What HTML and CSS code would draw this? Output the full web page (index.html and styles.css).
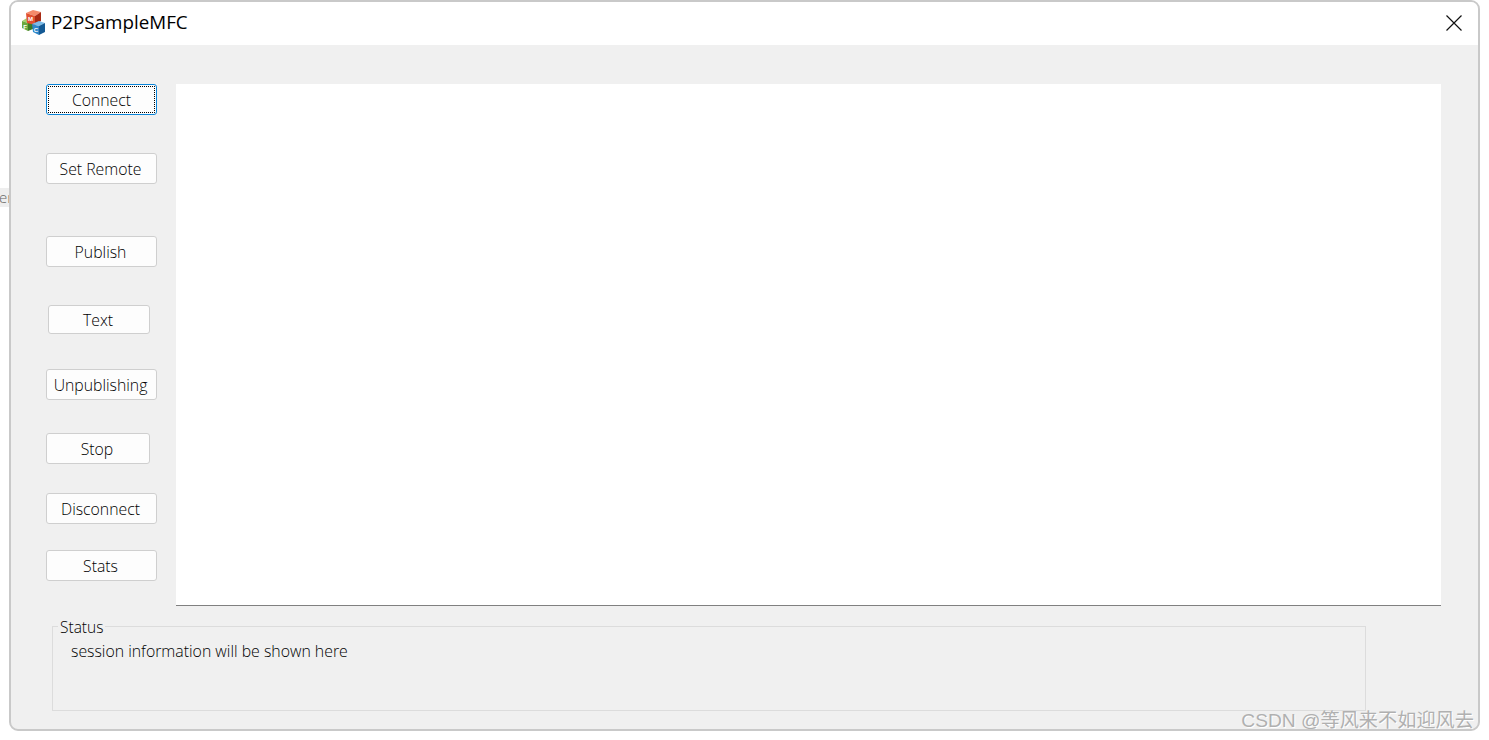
FILE: index.html
```html
<!DOCTYPE html>
<html lang="en">
<head>
<meta charset="utf-8">
<title>P2PSampleMFC</title>
<link rel="stylesheet" href="styles.css">
</head>
<body>
<div class="behind-tab"><span>en</span></div>
<div class="window">
  <header class="titlebar">
    <svg class="app-icon" width="26" height="26" viewBox="0 0 26 26" aria-hidden="true">
      <path fill="#a5cf6a" d="M1 11l5-3 6 3-5 2z"/>
      <path fill="#6aa83c" d="M1 11l6 2v8l-6-3z"/>
      <path fill="#3d7a25" d="M7 13l5-2v8l-5 2z"/>
      <path fill="#f58a6a" d="M5 3l7-3 8 2-6 4z"/>
      <path fill="#e2502f" d="M5 3l9 3v9l-8-2z"/>
      <path fill="#a82a14" d="M14 6l6-4v9l-6 4z"/>
      <path fill="#7cbce8" d="M11 14l7-3 6 2-6 3z"/>
      <path fill="#2f86c8" d="M11 14l7 2v9l-6-3z"/>
      <path fill="#145a94" d="M18 16l6-3v9l-6 3z"/>
      <text class="cube-letter" x="9.500" y="11">M</text>
      <text class="cube-letter" x="4" y="18.500">F</text>
      <text class="cube-letter" x="14.800" y="21.500">C</text>
    </svg>
    <h1 class="title">P2PSampleMFC</h1>
    <svg class="close" width="16" height="16" viewBox="0 0 16 16" aria-hidden="true">
      <path d="M.5.5l15 15M15.500.5l-15 15" fill="none" stroke="#111" stroke-width="1.200"/>
    </svg>
  </header>
  <main class="client">
    <div class="top-row">
      <div class="actions">
        <button class="btn btn-connect"><span class="focus-ring">Connect</span></button>
        <button class="btn btn-remote">Set Remote</button>
        <button class="btn btn-publish">Publish</button>
        <button class="btn btn-text">Text</button>
        <button class="btn btn-unpublish">Unpublishing</button>
        <button class="btn btn-stop">Stop</button>
        <button class="btn btn-disconnect">Disconnect</button>
        <button class="btn btn-stats">Stats</button>
      </div>
      <div class="video"></div>
    </div>
    <section class="status">
      <span class="status-label">Status</span>
      <p class="status-text">session information will be shown here</p>
    </section>
  </main>
  <div class="watermark">CSDN @等风来不如迎风去</div>
</div>
</body>
</html>
```
FILE: styles.css
```css
* { box-sizing: border-box; }
html, body { margin: 0; height: 100%; }
body {
  background: #fff;
  padding: 0 9px 9px 9px;
  font-family: "Open Sans", "Noto Sans", sans-serif;
  color: #111;
  overflow: hidden;
}
.behind-tab {
  position: absolute;
  left: 0;
  top: 188px;
  width: 10px;
  height: 19px;
  background: #eeeeee;
  overflow: hidden;
  display: flex;
  justify-content: flex-start;
  font-size: 15px;
  line-height: 19px;
  color: #666;
  font-weight: 300;
}
.behind-tab span { flex: none; margin-left: -1px; }
.window {
  position: relative;
  width: 1471px;
  height: 731px;
  border: 2px solid #c9c9c9;
  border-radius: 9px;
  background: #f0f0f0;
  overflow: hidden;
  display: flex;
  flex-direction: column;
}
.titlebar {
  flex: none;
  height: 43px;
  background: #fff;
  display: flex;
  align-items: center;
  padding: 0 16px 0 10px;
}
.app-icon { flex: none; margin-top: -2px; }
.cube-letter {
  font-family: "Liberation Sans", sans-serif;
  font-size: 6px;
  font-weight: 700;
  fill: #fff;
  text-anchor: middle;
}
.title {
  margin: -4px 0 0 4px;
  font-size: 18.800px;
  font-weight: 400;
  line-height: 24px;
  color: #000;
}
.close { margin: -1px 0 0 auto; }
.client {
  flex: 1;
  padding: 39px 0 0 35px;
}
.top-row {
  display: flex;
  align-items: flex-start;
}
.actions {
  flex: none;
  width: 130px;
  display: flex;
  flex-direction: column;
  align-items: flex-start;
}
.btn {
  width: 111px;
  height: 31px;
  padding: 2px 2px 0 0;
  border: 1px solid #cfcfcf;
  border-radius: 3px;
  background: #fdfdfd;
  font: 300 15.800px/1 "Open Sans", "Noto Sans", sans-serif;
  color: #000;
  display: flex;
  align-items: center;
  justify-content: center;
}
.btn-connect { border-color: #0a84d8; padding: 1px; }
.focus-ring {
  flex: 1;
  align-self: stretch;
  display: flex;
  align-items: center;
  justify-content: center;
  padding-top: 2px;
  border: 1px dotted #000;
  border-radius: 1px;
}
.btn-remote { margin-top: 38px; }
.btn-publish { margin-top: 52px; }
.btn-text { margin: 38px 0 0 2px; width: 102px; height: 29px; }
.btn-unpublish { margin-top: 35px; }
.btn-stop { margin-top: 33px; width: 104px; }
.btn-disconnect { margin-top: 29px; }
.btn-stats { margin-top: 26px; }
.video {
  flex: none;
  width: 1265px;
  height: 522px;
  background: #fff;
  border-bottom: 1px solid #808080;
}
.status {
  position: relative;
  width: 1314px;
  height: 85px;
  margin: 20px 0 0 6px;
  border: 1px solid #dcdcdc;
}
.status-label {
  position: absolute;
  left: 5px;
  top: -10px;
  padding: 0 2px;
  background: #f0f0f0;
  font-size: 15.500px;
  font-weight: 300;
  line-height: 20px;
  color: #000;
}
.status-text {
  margin: 0;
  padding: 14px 0 0 18px;
  font-size: 15.850px;
  font-weight: 300;
  line-height: 20px;
  color: #000;
}
.watermark {
  position: absolute;
  right: 4px;
  bottom: -4px;
  font-family: "Liberation Sans", "Noto Sans CJK SC", sans-serif;
  font-size: 19.200px;
  font-weight: 400;
  line-height: 24px;
  color: #b0b0b0;
  text-shadow: 1px 1px 0 #fff;
  white-space: nowrap;
}
```
